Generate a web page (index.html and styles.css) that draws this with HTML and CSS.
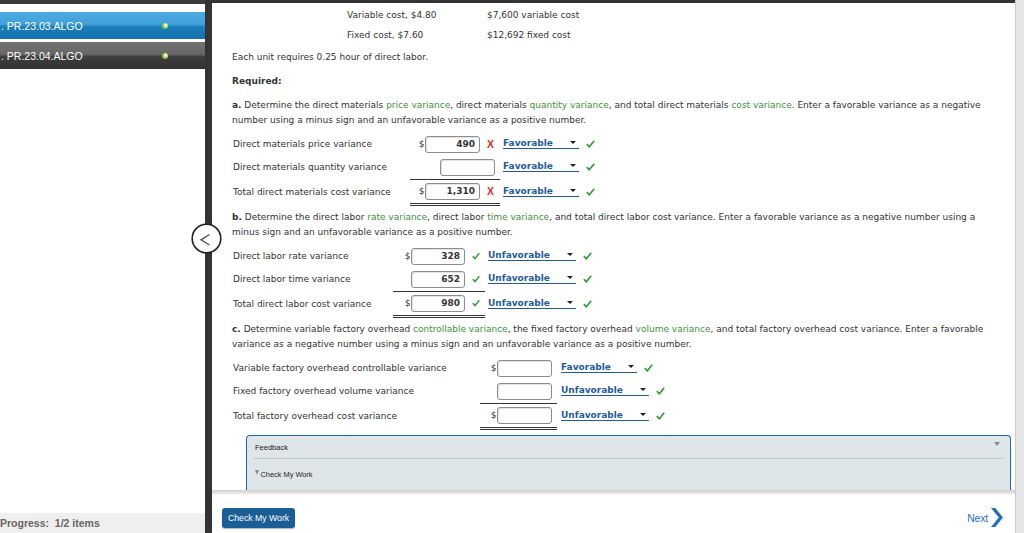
FILE: index.html
```html
<!DOCTYPE html>
<html>
<head>
<meta charset="utf-8">
<link rel="stylesheet" href="styles.css">
</head>
<body>
<div class="app">
  <aside class="sidebar">
    <div class="sidebar-top"></div>
    <ul class="items">
      <li class="item active"><span class="item-name">. PR.23.03.ALGO</span><span class="dot"></span></li>
      <li class="item"><span class="item-name">. PR.23.04.ALGO</span><span class="dot"></span></li>
    </ul>
    <div class="progress">Progress:  1/2 items</div>
  </aside>
  <div class="divider"></div>
  <main class="main">
    <div class="main-top"></div>
    <div class="content">
      <div class="given">
        <span>Variable cost, $4.80</span><span>$7,600 variable cost</span>
        <span>Fixed cost, $7.60</span><span>$12,692 fixed cost</span>
      </div>
      <p class="note">Each unit requires 0.25 hour of direct labor.</p>
      <p class="required">Required:</p>

      <p class="para"><b>a.</b> Determine the direct materials <span class="term">price variance</span>, direct materials <span class="term">quantity variance</span>, and total direct materials <span class="term">cost variance</span>. Enter a favorable variance as a negative number using a minus sign and an unfavorable variance as a positive number.</p>
      <div class="vtable vt-a">
        <div class="vrow">
          <span class="vlabel">Direct materials price variance</span>
          <span class="vcell"><span class="cur">$</span><span class="inp">490</span><span class="mark wrong">X</span></span>
          <span class="sel">Favorable<i class="caret"></i></span>
          <svg class="ok" viewBox="0 0 9 8" width="9" height="8"><polyline points="0.8,4.2 3.3,6.8 8.2,0.8"/></svg>
        </div>
        <div class="vrow">
          <span class="vlabel">Direct materials quantity variance</span>
          <span class="vcell"><span class="inp"></span></span>
          <span class="sel">Favorable<i class="caret"></i></span>
          <svg class="ok" viewBox="0 0 9 8" width="9" height="8"><polyline points="0.8,4.2 3.3,6.8 8.2,0.8"/></svg>
        </div>
        <div class="vrow total">
          <span class="vlabel">Total direct materials cost variance</span>
          <span class="vcell"><span class="cur">$</span><span class="inp">1,310</span><span class="mark wrong">X</span></span>
          <span class="sel">Favorable<i class="caret"></i></span>
          <svg class="ok" viewBox="0 0 9 8" width="9" height="8"><polyline points="0.8,4.2 3.3,6.8 8.2,0.8"/></svg>
        </div>
      </div>

      <p class="para"><b>b.</b> Determine the direct labor <span class="term">rate variance</span>, direct labor <span class="term">time variance</span>, and total direct labor cost variance. Enter a favorable variance as a negative number using a minus sign and an unfavorable variance as a positive number.</p>
      <div class="vtable vt-b">
        <div class="vrow">
          <span class="vlabel">Direct labor rate variance</span>
          <span class="vcell"><span class="cur">$</span><span class="inp">328</span><svg class="ok mark" viewBox="0 0 9 8" width="9" height="8"><polyline points="0.8,4.2 3.3,6.8 8.2,0.8"/></svg></span>
          <span class="sel">Unfavorable<i class="caret"></i></span>
          <svg class="ok" viewBox="0 0 9 8" width="9" height="8"><polyline points="0.8,4.2 3.3,6.8 8.2,0.8"/></svg>
        </div>
        <div class="vrow">
          <span class="vlabel">Direct labor time variance</span>
          <span class="vcell"><span class="inp">652</span><svg class="ok mark" viewBox="0 0 9 8" width="9" height="8"><polyline points="0.8,4.2 3.3,6.8 8.2,0.8"/></svg></span>
          <span class="sel">Unfavorable<i class="caret"></i></span>
          <svg class="ok" viewBox="0 0 9 8" width="9" height="8"><polyline points="0.8,4.2 3.3,6.8 8.2,0.8"/></svg>
        </div>
        <div class="vrow total">
          <span class="vlabel">Total direct labor cost variance</span>
          <span class="vcell"><span class="cur">$</span><span class="inp">980</span><svg class="ok mark" viewBox="0 0 9 8" width="9" height="8"><polyline points="0.8,4.2 3.3,6.8 8.2,0.8"/></svg></span>
          <span class="sel">Unfavorable<i class="caret"></i></span>
          <svg class="ok" viewBox="0 0 9 8" width="9" height="8"><polyline points="0.8,4.2 3.3,6.8 8.2,0.8"/></svg>
        </div>
      </div>

      <p class="para"><b>c.</b> Determine variable factory overhead <span class="term">controllable variance</span>, the fixed factory overhead <span class="term">volume variance</span>, and total factory overhead cost variance. Enter a favorable variance as a negative number using a minus sign and an unfavorable variance as a positive number.</p>
      <div class="vtable vt-c">
        <div class="vrow">
          <span class="vlabel">Variable factory overhead controllable variance</span>
          <span class="vcell"><span class="cur">$</span><span class="inp"></span></span>
          <span class="sel">Favorable<i class="caret"></i></span>
          <svg class="ok" viewBox="0 0 9 8" width="9" height="8"><polyline points="0.8,4.2 3.3,6.8 8.2,0.8"/></svg>
        </div>
        <div class="vrow">
          <span class="vlabel">Fixed factory overhead volume variance</span>
          <span class="vcell"><span class="inp"></span></span>
          <span class="sel">Unfavorable<i class="caret"></i></span>
          <svg class="ok" viewBox="0 0 9 8" width="9" height="8"><polyline points="0.8,4.2 3.3,6.8 8.2,0.8"/></svg>
        </div>
        <div class="vrow total">
          <span class="vlabel">Total factory overhead cost variance</span>
          <span class="vcell"><span class="cur">$</span><span class="inp"></span></span>
          <span class="sel">Unfavorable<i class="caret"></i></span>
          <svg class="ok" viewBox="0 0 9 8" width="9" height="8"><polyline points="0.8,4.2 3.3,6.8 8.2,0.8"/></svg>
        </div>
      </div>

      <section class="feedback">
        <div class="fb-head"><span>Feedback</span><i class="fb-caret"></i></div>
        <div class="fb-check"><i class="tri"></i>Check My Work</div>
      </section>
    </div>
    <footer class="footer">
      <button class="check-btn">Check My Work</button>
      <a class="next">Next<svg viewBox="0 0 12 19" width="12" height="19"><polygon points="0,0 4.2,0 12,9.5 4.2,19 0,19 7.8,9.5"/></svg></a>
    </footer>
  </main>
  <div class="scrollstrip"></div>
  <div class="back"><svg viewBox="0 0 31 31" width="31" height="31"><circle cx="15.5" cy="15.5" r="14.3"/><polyline points="18.5,11.5 10,16.8 18.5,22"/></svg></div>
</div>
</body>
</html>
```

FILE: styles.css
```css
* { box-sizing: border-box; }
html, body { margin: 0; padding: 0; }
body { width: 1024px; height: 533px; overflow: hidden; background: #fff; }

.app { display: flex; height: 533px; position: relative; }

/* sidebar */
.sidebar { width: 205px; flex: none; display: flex; flex-direction: column; background: #fff;
  font-family: "Liberation Sans", Arial, sans-serif; }
.sidebar-top { height: 4px; background: #3a3a3a; flex: none; }
.items { list-style: none; margin: 8px 0 0; padding: 0; display: flex; flex-direction: column; gap: 3px; }
.item { height: 27px; display: flex; align-items: center; justify-content: space-between;
  padding: 0 37px 0 0; color: #fff; font-size: 10.5px;
  background: linear-gradient(#727272 0%, #676767 45%, #3d3d3d 55%, #323232 100%); }
.item.active { background: linear-gradient(#4aaae0 0%, #41a1da 45%, #1b7eb8 55%, #1473ad 100%); }
.item-name { padding-left: 1px; }
.dot { width: 6px; height: 6px; border-radius: 50%;
  background: radial-gradient(circle at 65% 35%, #f4ffe6 0 18%, #9fd45e 40%, #69a92d 100%); }
.progress { margin-top: auto; height: 20px; background: #efefef; color: #666; font-weight: bold;
  font-size: 10.5px; display: flex; align-items: center; white-space: pre; flex: none; }

.divider { width: 7px; flex: none; background: #333; }

/* main */
.main { flex: 1; min-width: 0; display: flex; flex-direction: column; }
.main-top { height: 3px; flex: none; background: #333; }
.content { flex: 1; overflow: hidden; padding: 2px 4px 0 20px;
  font-family: "DejaVu Sans", Verdana, sans-serif; font-size: 9px; color: #333; }
.content p { margin: 0; }

.given { display: grid; grid-template-columns: 140px auto; grid-auto-rows: 20px; align-items: center;
  margin-left: 115px; }
.note { margin-top: 4.5px !important; line-height: 15px; }
.required { margin-top: 9px !important; line-height: 15px; font-weight: bold; }
.para { margin: 9px 13px 0 0 !important; line-height: 15px; }
.vtable + .para { margin-top: 4px !important; }
.term { color: #3f9240; }

.vtable { margin: 5px 0 0 1px; }
.vrow { display: flex; align-items: center; height: 23px; }
.vrow.total { height: 27px; }
.vlabel { flex: none; }
.vcell { flex: none; align-self: stretch; display: flex; align-items: center; justify-content: flex-end;
  padding-right: 5px; }
.vrow.total .vcell { border-top: 1px solid #333; border-bottom: 3px double #333; }
.cur { margin-right: 0.5px; }
.inp { width: 55px; height: 17px; border: 1px solid #8d8d8d; border-radius: 3px;
  box-shadow: inset 1px 1px 1px rgba(0,0,0,0.12); display: flex; align-items: center;
  justify-content: flex-end; padding-right: 4px; font-weight: bold; background: #fff; }
.mark { flex: none; width: 8px; margin-left: 7px; }
.wrong { color: #e0291e; font-family: "Liberation Sans", Arial, sans-serif; font-weight: bold; font-size: 10.5px;
  line-height: 10px; }
.sel { display: inline-flex; align-items: center; height: 12px; margin-left: 3px; margin-top: -2px;
  padding-right: 3px; color: #1f5c99; font-weight: bold; border-bottom: 1.5px solid #1f5c99; line-height: 10px; }
.caret { width: 0; height: 0; margin-left: 17px; border-left: 3px solid transparent;
  border-right: 3px solid transparent; border-top: 3.5px solid #222; }
.ok { flex: none; margin-left: 7px; }
.vcell .ok.mark { margin-left: 7px; width: 8px; }
.ok polyline { fill: none; stroke: #3a9a3a; stroke-width: 1.7; }

.vt-a .vlabel { width: 177px; }
.vt-a .vcell { width: 90px; }
.vt-b .vlabel { width: 160px; }
.vt-b .vcell { width: 92px; }
.vt-b .inp { width: 54px; }
.vt-c .vlabel { width: 247px; }
.vt-c .vcell { width: 77px; }
.vt-c .sel { margin-left: 4px; }

/* feedback */
.feedback { margin: 5.5px 0 0 14px; border: 1px solid #1f67b5; border-bottom: none;
  border-radius: 4px 4px 0 0; background: #dee6e9; font-family: "Liberation Sans", Arial, sans-serif;
  color: #222; height: 80px; }
.fb-head { margin: 0 7px; height: 23px; border-bottom: 1px solid #c0c5c8; display: flex;
  align-items: center; justify-content: space-between; font-size: 7.5px; padding: 0 3px 0 1px; }
.fb-caret { width: 0; height: 0; border-left: 3px solid transparent; border-right: 3px solid transparent;
  border-top: 4px solid #8a8a8a; margin-top: -6px; }
.fb-check { margin: 8px 8px 0; height: 14px; display: flex; align-items: center; font-size: 7.4px; }
.tri { width: 0; height: 0; border-left: 2.5px solid transparent; border-right: 2.5px solid transparent;
  border-top: 5px solid #8a8a8a; margin-right: 1.5px; margin-top: -3px; }

/* footer */
.footer { height: 43px; flex: none; display: flex; justify-content: space-between; align-items: flex-start;
  padding: 18px 12px 0 10px; font-family: "Liberation Sans", Arial, sans-serif;
  background: linear-gradient(#cdcdcd 0, #dedede 2px, #ececec 4px, #fff 5px); }
.check-btn { height: 20px; padding: 0 6px; border: none; border-radius: 3px; background: #1b5e96;
  color: #fff; font-family: "Liberation Sans", Arial, sans-serif; font-size: 8.7px;
  box-shadow: 0 1px 1px rgba(0,0,0,0.3); }
.next { display: flex; align-items: center; gap: 3px; color: #1b6fc2; font-size: 10.5px; letter-spacing: -0.2px; }
.next svg polygon { fill: #1b6fc2; }

.scrollstrip { width: 9px; flex: none; background: #e6e6e6; border-left: 1px solid #cdcdcd; }

.back { position: absolute; left: 191px; top: 223px; width: 31px; height: 31px; }
.back circle { fill: #fff; stroke: #222; stroke-width: 1.6; }
.back polyline { fill: none; stroke: #555; stroke-width: 1.4; }
```
